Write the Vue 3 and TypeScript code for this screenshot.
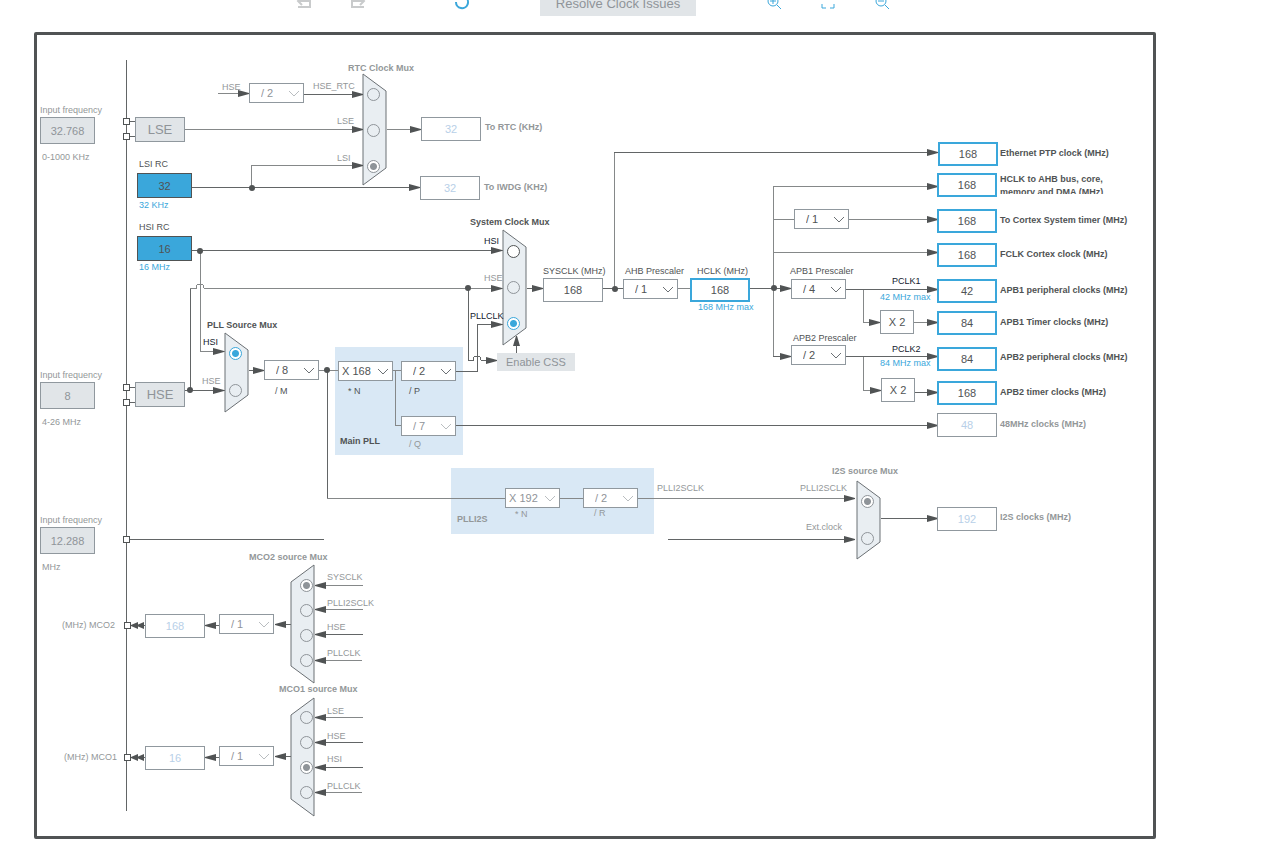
<script setup lang="ts">
import { reactive } from 'vue'

type Tone = 'dark' | 'grey' | 'blue' | 'ink'

interface Label { x: number; cy: number; text: string; tone: Tone; bold?: boolean; for?: string }
interface Field { id: string; x: number; y: number; value: string; kind: 'source' | 'rc' | 'output' | 'plain' | 'idle'; name: string }
interface Picker { id: string; x: number; y: number; value: string; options: string[]; name: string; off?: boolean }
interface Mux { id: string; x: number; top: number; bottom: number; flipped?: boolean; title: string; ys: number[]; inputs: string[]; picked: string; active?: boolean; open?: string }
interface Wire { d: string; soft?: boolean }
interface Arrow { x: number; y: number; dir: 'right' | 'left' | 'up' }

// Diagram coordinates start at this corner of the sheet.
const ORIGIN = { x: 37, y: 35 }
const at = (x: number, y: number) => ({ left: `${x - ORIGIN.x}px`, top: `${y - ORIGIN.y}px` })

const divs = ['/ 1', '/ 2', '/ 4', '/ 8', '/ 16']

const pickers = reactive<Picker[]>([
  { id: 'rtc-div', x: 249, y: 83, value: '/ 2', options: divs, name: 'RTC divider', off: true },
  { id: 'pll-m', x: 264, y: 360, value: '/ 8', options: divs, name: 'PLL M' },
  { id: 'pll-n', x: 338, y: 361, value: 'X 168', options: ['X 168', 'X 192'], name: 'PLL N' },
  { id: 'pll-p', x: 401, y: 361, value: '/ 2', options: ['/ 2', '/ 4', '/ 6', '/ 8'], name: 'PLL P' },
  { id: 'pll-q', x: 401, y: 416, value: '/ 7', options: ['/ 4', '/ 7'], name: 'PLL Q', off: true },
  { id: 'i2s-n', x: 505, y: 488, value: 'X 192', options: ['X 168', 'X 192'], name: 'PLLI2S N', off: true },
  { id: 'i2s-r', x: 583, y: 488, value: '/ 2', options: divs, name: 'PLLI2S R', off: true },
  { id: 'ahb', x: 623, y: 279, value: '/ 1', options: divs, name: 'AHB Prescaler' },
  { id: 'cortex', x: 794, y: 209, value: '/ 1', options: ['/ 1', '/ 8'], name: 'Cortex timer divider' },
  { id: 'apb1', x: 791, y: 279, value: '/ 4', options: divs, name: 'APB1 Prescaler' },
  { id: 'apb2', x: 791, y: 345, value: '/ 2', options: divs, name: 'APB2 Prescaler' },
  { id: 'mco2-div', x: 219, y: 614, value: '/ 1', options: divs, name: 'MCO2 divider', off: true },
  { id: 'mco1-div', x: 219, y: 746, value: '/ 1', options: divs, name: 'MCO1 divider', off: true },
])

const fields = reactive<Field[]>([
  { id: 'lse-freq', x: 40, y: 117, value: '32.768', kind: 'source', name: 'LSE input frequency' },
  { id: 'hse-freq', x: 40, y: 382, value: '8', kind: 'source', name: 'HSE input frequency' },
  { id: 'i2s-freq', x: 40, y: 527, value: '12.288', kind: 'source', name: 'I2S input frequency' },
  { id: 'lsi', x: 137, y: 173, value: '32', kind: 'rc', name: 'LSI RC' },
  { id: 'hsi', x: 137, y: 236, value: '16', kind: 'rc', name: 'HSI RC' },
  { id: 'rtc', x: 421, y: 117, value: '32', kind: 'idle', name: 'To RTC' },
  { id: 'iwdg', x: 420, y: 176, value: '32', kind: 'idle', name: 'To IWDG' },
  { id: 'sysclk', x: 543, y: 278, value: '168', kind: 'plain', name: 'SYSCLK' },
  { id: 'hclk', x: 690, y: 278, value: '168', kind: 'output', name: 'HCLK' },
  { id: 'ptp', x: 938, y: 142, value: '168', kind: 'output', name: 'Ethernet PTP' },
  { id: 'bus', x: 937, y: 173, value: '168', kind: 'output', name: 'AHB bus' },
  { id: 'systick', x: 937, y: 209, value: '168', kind: 'output', name: 'Cortex System timer' },
  { id: 'fclk', x: 937, y: 243, value: '168', kind: 'output', name: 'FCLK' },
  { id: 'apb1-p', x: 937, y: 279, value: '42', kind: 'output', name: 'APB1 peripherals' },
  { id: 'apb1-t', x: 937, y: 311, value: '84', kind: 'output', name: 'APB1 timers' },
  { id: 'apb2-p', x: 937, y: 347, value: '84', kind: 'output', name: 'APB2 peripherals' },
  { id: 'apb2-t', x: 937, y: 381, value: '168', kind: 'output', name: 'APB2 timers' },
  { id: 'clk48', x: 937, y: 413, value: '48', kind: 'idle', name: '48MHz clocks' },
  { id: 'i2s', x: 937, y: 507, value: '192', kind: 'idle', name: 'I2S clocks' },
  { id: 'mco2', x: 145, y: 614, value: '168', kind: 'idle', name: 'MCO2' },
  { id: 'mco1', x: 145, y: 746, value: '16', kind: 'idle', name: 'MCO1' },
])

const muxes = reactive<Mux[]>([
  { id: 'mux-rtc', x: 363, top: 74, bottom: 185, title: 'RTC Clock Mux', ys: [94, 130, 166], inputs: ['HSE_RTC', 'LSE', 'LSI'], picked: 'LSI' },
  { id: 'mux-sys', x: 503, top: 230, bottom: 345, title: 'System Clock Mux', ys: [251, 287, 323], inputs: ['HSI', 'HSE', 'PLLCLK'], picked: 'PLLCLK', active: true, open: 'HSI' },
  { id: 'mux-pll', x: 225, top: 333, bottom: 412, title: 'PLL Source Mux', ys: [353, 390], inputs: ['HSI', 'HSE'], picked: 'HSI', active: true },
  { id: 'mux-i2s', x: 857, top: 481, bottom: 559, title: 'I2S source Mux', ys: [501, 538], inputs: ['PLLI2SCLK', 'Ext.clock'], picked: 'PLLI2SCLK' },
  { id: 'mux-mco2', x: 291, top: 565, bottom: 683, flipped: true, title: 'MCO2 source Mux', ys: [585, 610, 635, 660], inputs: ['SYSCLK', 'PLLI2SCLK', 'HSE', 'PLLCLK'], picked: 'SYSCLK' },
  { id: 'mux-mco1', x: 291, top: 698, bottom: 816, flipped: true, title: 'MCO1 source Mux', ys: [717, 742, 767, 792], inputs: ['LSE', 'HSE', 'HSI', 'PLLCLK'], picked: 'HSI' },
])

const muxShape = (m: Mux) => {
  const r = m.x + 23
  return m.flipped
    ? `${r},${m.top} ${m.x},${m.top + 17} ${m.x},${m.bottom - 17} ${r},${m.bottom}`
    : `${m.x},${m.top} ${r},${m.top + 17} ${r},${m.bottom - 17} ${m.x},${m.bottom}`
}
const radioX = (m: Mux) => m.x + (m.flipped ? 9 : 4)

const labels: Label[] = [
  { x: 40, cy: 110, text: 'Input frequency', tone: 'grey', for: 'lse-freq' },
  { x: 42, cy: 157, text: '0-1000 KHz', tone: 'grey' },
  { x: 40, cy: 375, text: 'Input frequency', tone: 'grey', for: 'hse-freq' },
  { x: 42, cy: 422, text: '4-26 MHz', tone: 'grey' },
  { x: 40, cy: 520, text: 'Input frequency', tone: 'grey', for: 'i2s-freq' },
  { x: 42, cy: 567, text: 'MHz', tone: 'grey' },
  { x: 139, cy: 164, text: 'LSI RC', tone: 'dark', for: 'lsi' },
  { x: 139, cy: 205, text: '32 KHz', tone: 'blue' },
  { x: 139, cy: 227, text: 'HSI RC', tone: 'dark', for: 'hsi' },
  { x: 139, cy: 267, text: '16 MHz', tone: 'blue' },
  { x: 222, cy: 87, text: 'HSE', tone: 'grey', for: 'rtc-div' },
  { x: 313, cy: 86, text: 'HSE_RTC', tone: 'grey', for: 'mux-rtc-0' },
  { x: 337, cy: 121, text: 'LSE', tone: 'grey', for: 'mux-rtc-1' },
  { x: 337, cy: 158, text: 'LSI', tone: 'grey', for: 'mux-rtc-2' },
  { x: 348, cy: 68, text: 'RTC Clock Mux', tone: 'grey', bold: true },
  { x: 485, cy: 127, text: 'To RTC (KHz)', tone: 'grey', bold: true, for: 'rtc' },
  { x: 484, cy: 187, text: 'To IWDG (KHz)', tone: 'grey', bold: true, for: 'iwdg' },
  { x: 470, cy: 222, text: 'System Clock Mux', tone: 'dark', bold: true },
  { x: 484, cy: 241, text: 'HSI', tone: 'ink', for: 'mux-sys-0' },
  { x: 484, cy: 278, text: 'HSE', tone: 'grey', for: 'mux-sys-1' },
  { x: 470, cy: 316, text: 'PLLCLK', tone: 'ink', for: 'mux-sys-2' },
  { x: 207, cy: 325, text: 'PLL Source Mux', tone: 'dark', bold: true },
  { x: 203, cy: 342, text: 'HSI', tone: 'ink', for: 'mux-pll-0' },
  { x: 202, cy: 381, text: 'HSE', tone: 'grey', for: 'mux-pll-1' },
  { x: 275, cy: 391, text: '/ M', tone: 'dark', for: 'pll-m' },
  { x: 348, cy: 391, text: '* N', tone: 'dark', for: 'pll-n' },
  { x: 409, cy: 391, text: '/ P', tone: 'dark', for: 'pll-p' },
  { x: 409, cy: 444, text: '/ Q', tone: 'grey', for: 'pll-q' },
  { x: 340, cy: 441, text: 'Main PLL', tone: 'dark', bold: true },
  { x: 515, cy: 514, text: '* N', tone: 'grey', for: 'i2s-n' },
  { x: 594, cy: 513, text: '/ R', tone: 'grey', for: 'i2s-r' },
  { x: 457, cy: 519, text: 'PLLI2S', tone: 'grey', bold: true },
  { x: 657, cy: 488, text: 'PLLI2SCLK', tone: 'grey' },
  { x: 800, cy: 488, text: 'PLLI2SCLK', tone: 'grey', for: 'mux-i2s-0' },
  { x: 806, cy: 527, text: 'Ext.clock', tone: 'grey', for: 'mux-i2s-1' },
  { x: 832, cy: 471, text: 'I2S source Mux', tone: 'grey', bold: true },
  { x: 543, cy: 271, text: 'SYSCLK (MHz)', tone: 'dark', for: 'sysclk' },
  { x: 625, cy: 271, text: 'AHB Prescaler', tone: 'dark', for: 'ahb' },
  { x: 697, cy: 271, text: 'HCLK (MHz)', tone: 'dark', for: 'hclk' },
  { x: 698, cy: 307, text: '168 MHz max', tone: 'blue' },
  { x: 790, cy: 271, text: 'APB1 Prescaler', tone: 'dark', for: 'apb1' },
  { x: 793, cy: 338, text: 'APB2 Prescaler', tone: 'dark', for: 'apb2' },
  { x: 892, cy: 281, text: 'PCLK1', tone: 'ink' },
  { x: 880, cy: 297, text: '42 MHz max', tone: 'blue' },
  { x: 892, cy: 349, text: 'PCLK2', tone: 'ink' },
  { x: 880, cy: 363, text: '84 MHz max', tone: 'blue' },
  { x: 1000, cy: 153, text: 'Ethernet PTP clock (MHz)', tone: 'dark', bold: true, for: 'ptp' },
  { x: 1000, cy: 220, text: 'To Cortex System timer (MHz)', tone: 'dark', bold: true, for: 'systick' },
  { x: 1000, cy: 254, text: 'FCLK Cortex clock (MHz)', tone: 'dark', bold: true, for: 'fclk' },
  { x: 1000, cy: 290, text: 'APB1 peripheral clocks (MHz)', tone: 'dark', bold: true, for: 'apb1-p' },
  { x: 1000, cy: 322, text: 'APB1 Timer clocks (MHz)', tone: 'dark', bold: true, for: 'apb1-t' },
  { x: 1000, cy: 357, text: 'APB2 peripheral clocks (MHz)', tone: 'dark', bold: true, for: 'apb2-p' },
  { x: 1000, cy: 392, text: 'APB2 timer clocks (MHz)', tone: 'dark', bold: true, for: 'apb2-t' },
  { x: 1000, cy: 424, text: '48MHz clocks (MHz)', tone: 'grey', bold: true, for: 'clk48' },
  { x: 1000, cy: 517, text: 'I2S clocks (MHz)', tone: 'grey', bold: true, for: 'i2s' },
  { x: 249, cy: 557, text: 'MCO2 source Mux', tone: 'grey', bold: true },
  { x: 327, cy: 577, text: 'SYSCLK', tone: 'grey', for: 'mux-mco2-0' },
  { x: 327, cy: 603, text: 'PLLI2SCLK', tone: 'grey', for: 'mux-mco2-1' },
  { x: 327, cy: 627, text: 'HSE', tone: 'grey', for: 'mux-mco2-2' },
  { x: 327, cy: 653, text: 'PLLCLK', tone: 'grey', for: 'mux-mco2-3' },
  { x: 62, cy: 625, text: '(MHz) MCO2', tone: 'grey', for: 'mco2' },
  { x: 279, cy: 689, text: 'MCO1 source Mux', tone: 'grey', bold: true },
  { x: 327, cy: 711, text: 'LSE', tone: 'grey', for: 'mux-mco1-0' },
  { x: 327, cy: 736, text: 'HSE', tone: 'grey', for: 'mux-mco1-1' },
  { x: 327, cy: 759, text: 'HSI', tone: 'grey', for: 'mux-mco1-2' },
  { x: 327, cy: 786, text: 'PLLCLK', tone: 'grey', for: 'mux-mco1-3' },
  { x: 64, cy: 757, text: '(MHz) MCO1', tone: 'grey', for: 'mco1' },
]

const wires: Wire[] = [
  { d: 'M126 60V811' },
  { d: 'M130 121H135M130 136H135M130 387H135M130 402H135' },
  { d: 'M218 93H249M185 129H363M251 187V165H363', soft: true },
  { d: 'M304 94H363M192 187H420' },
  { d: 'M387 129H421', soft: true },
  { d: 'M192 250H503' },
  { d: 'M200 250V351H225', soft: true },
  { d: 'M190 390V288' },
  { d: 'M190 288H196Q196 284 200 284Q204 284 204 288H503', soft: true },
  { d: 'M185 390H225M249 370H264M327 370V498' },
  { d: 'M319 370H338M393 370H401M395 370V425H401', soft: true },
  { d: 'M456 371H477V324H503' },
  { d: 'M456 425H937' },
  { d: 'M468 288V360H473Q473 356 477 356Q481 356 481 360H497' },
  { d: 'M516 353V342M527 288H543M603 288H623' },
  { d: 'M614 288V152', soft: true },
  { d: 'M614 152H937' },
  { d: 'M678 288H690M773 186V356M773 186H937M773 219H794M849 219H937M773 252H937M863 289V322H880M914 322H937M863 356V390H881', soft: true },
  { d: 'M750 288H791M773 356H791M846 289H937M846 356H937M915 392H937' },
  { d: 'M327 498H505M560 498H583M638 498H855', soft: true },
  { d: 'M668 539H855M881 518H937M130 539H324' },
  { d: 'M315 585H363M315 609H363M315 660H362M315 717H363M315 792H362', soft: true },
  { d: 'M315 634H363M315 742H363M315 767H363' },
  { d: 'M291 624H275M219 625H205M145 625H131M291 756H275M219 757H205M145 757H131' },
]

const arrows: Arrow[] = [
  { x: 249, y: 93, dir: 'right' }, { x: 363, y: 94, dir: 'right' }, { x: 363, y: 129, dir: 'right' },
  { x: 363, y: 165, dir: 'right' }, { x: 421, y: 129, dir: 'right' }, { x: 420, y: 187, dir: 'right' },
  { x: 502, y: 250, dir: 'right' }, { x: 502, y: 288, dir: 'right' }, { x: 502, y: 324, dir: 'right' },
  { x: 224, y: 351, dir: 'right' }, { x: 224, y: 390, dir: 'right' }, { x: 264, y: 370, dir: 'right' },
  { x: 497, y: 360, dir: 'right' }, { x: 543, y: 288, dir: 'right' }, { x: 791, y: 288, dir: 'right' },
  { x: 791, y: 356, dir: 'right' }, { x: 938, y: 152, dir: 'right' }, { x: 938, y: 186, dir: 'right' },
  { x: 938, y: 219, dir: 'right' }, { x: 938, y: 252, dir: 'right' }, { x: 938, y: 289, dir: 'right' },
  { x: 880, y: 322, dir: 'right' }, { x: 938, y: 322, dir: 'right' }, { x: 938, y: 356, dir: 'right' },
  { x: 881, y: 390, dir: 'right' }, { x: 938, y: 392, dir: 'right' }, { x: 938, y: 425, dir: 'right' },
  { x: 938, y: 518, dir: 'right' }, { x: 855, y: 498, dir: 'right' }, { x: 855, y: 539, dir: 'right' },
  { x: 315, y: 585, dir: 'left' }, { x: 315, y: 609, dir: 'left' }, { x: 315, y: 634, dir: 'left' },
  { x: 315, y: 660, dir: 'left' }, { x: 315, y: 717, dir: 'left' }, { x: 315, y: 742, dir: 'left' },
  { x: 315, y: 767, dir: 'left' }, { x: 315, y: 792, dir: 'left' }, { x: 275, y: 624, dir: 'left' },
  { x: 205, y: 625, dir: 'left' }, { x: 275, y: 756, dir: 'left' }, { x: 205, y: 757, dir: 'left' },
  { x: 516, y: 336, dir: 'up' },
]
const head = (a: Arrow) =>
  a.dir === 'right' ? `M${a.x} ${a.y}v1l-11 3v-7z` : a.dir === 'left' ? `M${a.x} ${a.y}v1l11 3v-7z` : `M${a.x} ${a.y}h1l3 10h-7z`

const dots = [[252, 188], [200, 251], [190, 390], [468, 288], [327, 370], [615, 289], [774, 288]]
const pins = [[123, 118], [123, 133], [123, 384], [123, 399], [123, 536], [124, 622], [124, 754]]
const pinHeads = ['M131 625v1l7 3v-7z', 'M137 625v1l7 3v-7z', 'M131 757v1l7 3v-7z', 'M137 757v1l7 3v-7z']
</script>

<template>
  <div class="page">
    <header class="toolbar">
      <div class="group">
        <button class="tool faded" aria-label="Undo" disabled>
          <svg viewBox="0 0 20 20"><path d="M4 9h12v6H4M8 5L4 9l4 4" /></svg>
        </button>
        <button class="tool faded" aria-label="Redo" disabled>
          <svg viewBox="0 0 20 20"><path d="M16 9H4v6h12M12 5l4 4-4 4" /></svg>
        </button>
      </div>
      <button class="tool refresh" aria-label="Refresh">
        <svg viewBox="0 0 20 20"><path d="M4 10a6 6 0 1 0 9-5M13 1v4h4" /></svg>
      </button>
      <button class="resolve" disabled>Resolve Clock Issues</button>
      <div class="group">
        <button class="tool" aria-label="Zoom in">
          <svg viewBox="0 0 20 20"><circle cx="9" cy="9" r="5" /><path d="M13 13l4 4M9 6v6M6 9h6" /></svg>
        </button>
        <button class="tool" aria-label="Fit to window">
          <svg viewBox="0 0 20 20"><path d="M4 7V4h4M12 4h4v3M16 12v4h-4M8 16H4v-4" /></svg>
        </button>
        <button class="tool" aria-label="Zoom out">
          <svg viewBox="0 0 20 20"><circle cx="9" cy="9" r="5" /><path d="M13 13l4 4M6 9h6" /></svg>
        </button>
      </div>
    </header>

    <main class="sheet">
      <div class="zone main-pll" :style="at(335, 347)"></div>
      <div class="zone plli2s" :style="at(451, 468)"></div>

      <svg class="wiring" aria-hidden="true">
        <g :transform="`translate(${-ORIGIN.x} ${-ORIGIN.y})`">
          <path v-for="w in wires" :key="w.d" :d="w.d" class="wire" :class="{ soft: w.soft }" />
          <polygon v-for="m in muxes" :key="m.id" :points="muxShape(m)" class="mux" />
          <path v-for="(a, i) in arrows" :key="i" :d="head(a)" class="head" />
          <circle v-for="(p, i) in dots" :key="i" :cx="p[0]" :cy="p[1]" r="3" class="head" />
          <path v-for="d in pinHeads" :key="d" :d="d" class="head" />
        </g>
      </svg>

      <span v-for="(p, i) in pins" :key="i" class="pin" :style="at(p[0], p[1])"></span>

      <div class="osc" :style="at(135, 117)">LSE</div>
      <div class="osc" :style="at(135, 382)">HSE</div>
      <div class="times" :style="at(880, 310)">X 2</div>
      <div class="times" :style="at(881, 378)">X 2</div>
      <button class="css" :style="at(497, 353)" disabled>Enable CSS</button>

      <input
        v-for="f in fields" :id="f.id" :key="f.id" v-model="f.value" type="text"
        class="field" :class="f.kind" :style="at(f.x, f.y)" :aria-label="f.name"
        :disabled="f.kind === 'source' || f.kind === 'idle'" :readonly="f.kind === 'rc'"
      >

      <div v-for="p in pickers" :key="p.id" class="picker" :class="{ off: p.off, wide: p.value[0] === 'X' }" :style="at(p.x, p.y)">
        <select :id="p.id" v-model="p.value" :aria-label="p.name" :disabled="p.off">
          <option v-for="o in p.options" :key="o">{{ o }}</option>
        </select>
        <svg viewBox="0 0 10 6" aria-hidden="true"><path d="M0 0l5 5 5-5" /></svg>
      </div>

      <template v-for="m in muxes" :key="m.id">
        <input
          v-for="(y, i) in m.ys" :id="`${m.id}-${i}`" :key="i" v-model="m.picked" type="radio"
          :name="m.id" :value="m.inputs[i]" :aria-label="`${m.title}: ${m.inputs[i]}`"
          class="radio" :class="{ active: m.active && m.picked === m.inputs[i], open: m.open === m.inputs[i] }"
          :style="at(radioX(m), y - 6)"
        >
      </template>

      <component
        :is="l.for ? 'label' : 'span'" v-for="(l, i) in labels" :key="i" :for="l.for"
        class="label" :class="[l.tone, { bold: l.bold }]" :style="at(l.x, l.cy - 6)"
      >{{ l.text }}</component>
      <label class="label dark bold clipped" for="bus" :style="at(1000, 173)">HCLK to AHB bus, core, memory and DMA (MHz)</label>
    </main>
  </div>
</template>

<style>
body {
  margin: 0;
  background: #fff;
}
</style>

<style scoped>
.page {
  font-family: "Liberation Sans", Arial, sans-serif;
  font-size: 9px;
  color: #505354;
  overflow: hidden;
}
.page * {
  box-sizing: border-box;
}
.toolbar {
  display: flex;
  align-items: flex-start;
  justify-content: center;
  gap: 68px;
  height: 32px;
  padding: 0 132px 0 34px;
  overflow: hidden;
}
.group {
  display: flex;
  gap: 34px;
}
.tool {
  width: 20px;
  height: 20px;
  margin: -8px 0 0;
  padding: 0;
  border: 0;
  background: none;
}
.tool svg {
  display: block;
  fill: none;
  stroke: #3aa7db;
  stroke-width: 1;
}
.tool.refresh {
  margin-left: 16px;
}
.tool.refresh svg {
  stroke-width: 2;
}
.tool.faded svg {
  stroke: #c9cbcc;
  stroke-width: 2;
}
.resolve {
  width: 156px;
  height: 28px;
  margin: -12px 0 0;
  padding: 2px 0 0;
  border: 0;
  background: #e1e5e8;
  color: #8f9499;
  font: 13px "Liberation Sans", Arial, sans-serif;
}
.sheet {
  position: relative;
  height: 807px;
  margin: 0 128px 15px 34px;
  border: 3px solid #505354;
  border-radius: 2px;
}
.zone,
.pin,
.osc,
.times,
.css,
.field,
.picker,
.radio,
.label {
  position: absolute;
}
.zone {
  background: #d9e8f5;
}
.main-pll {
  width: 128px;
  height: 108px;
}
.plli2s {
  width: 203px;
  height: 66px;
}
.wiring {
  position: absolute;
  inset: 0;
  width: 100%;
  height: 100%;
}
.wire {
  fill: none;
  stroke: #626566;
  shape-rendering: crispEdges;
}
.wire.soft {
  stroke: #858889;
}
.mux {
  fill: #e9eef2;
  stroke: #6b7074;
}
.head {
  fill: #505354;
}
.pin {
  width: 7px;
  height: 7px;
  border: 1px solid #505354;
  background: #fff;
}
.osc,
.times,
.css {
  display: flex;
  align-items: center;
  justify-content: center;
}
.osc {
  width: 50px;
  height: 25px;
  border: 1px solid #90989e;
  background: #e1e5e8;
  color: #8f9499;
  font-size: 13px;
}
.times {
  width: 34px;
  height: 24px;
  border: 1px solid #90989e;
  background: #fff;
  font-size: 11px;
}
.css {
  width: 78px;
  height: 18px;
  padding: 0;
  border: 0;
  background: #e1e5e8;
  color: #8f9499;
  font: 11px "Liberation Sans", Arial, sans-serif;
}
.field {
  width: 60px;
  height: 24px;
  margin: 0;
  padding: 0;
  border: 1px solid #90989e;
  border-radius: 0;
  background: #fff;
  color: #505354;
  font: 11px "Liberation Sans", Arial, sans-serif;
  text-align: center;
}
.field.source {
  width: 55px;
  height: 27px;
  background: #e1e5e8;
  color: #8f9499;
}
.field.rc {
  width: 55px;
  height: 25px;
  border-color: #505354;
  background: #3aa7db;
}
.field.output {
  border: 2px solid #3aa7db;
}
.field.idle {
  color: #b8d0e8;
}
.picker {
  width: 55px;
  height: 20px;
}
.picker select {
  width: 100%;
  height: 100%;
  margin: 0;
  padding: 0 0 0 11px;
  border: 1px solid #90989e;
  border-radius: 0;
  background: #fff;
  color: #505354;
  font: 11px "Liberation Sans", Arial, sans-serif;
  appearance: none;
  opacity: 1;
}
.picker.wide select {
  padding-left: 3px;
}
.picker svg {
  position: absolute;
  right: 5px;
  top: 8px;
  width: 10px;
  height: 6px;
  fill: none;
  stroke: #6b7074;
  pointer-events: none;
}
.picker.off select {
  color: #8f9499;
}
.picker.off svg {
  stroke: #b9bdc0;
}
.radio {
  width: 13px;
  height: 13px;
  margin: 0;
  border: 1px solid #8f9499;
  border-radius: 50%;
  background: none;
  appearance: none;
}
.radio:checked {
  background: radial-gradient(circle, #8f9499 3px, #fff 4px);
}
.radio.open {
  border-color: #505354;
  background: #fff;
}
.radio.active {
  border-color: #3aa7db;
  background: radial-gradient(circle, #3aa7db 3px, #fff 4px);
}
.label {
  line-height: 12px;
  white-space: nowrap;
}
.dark {
  color: #505354;
}
.grey {
  color: #939799;
}
.blue {
  color: #3aa7db;
}
.ink {
  color: #14212e;
}
.bold {
  font-weight: 700;
}
.clipped {
  width: 130px;
  height: 21px;
  line-height: 13px;
  white-space: normal;
  overflow: hidden;
}
</style>
